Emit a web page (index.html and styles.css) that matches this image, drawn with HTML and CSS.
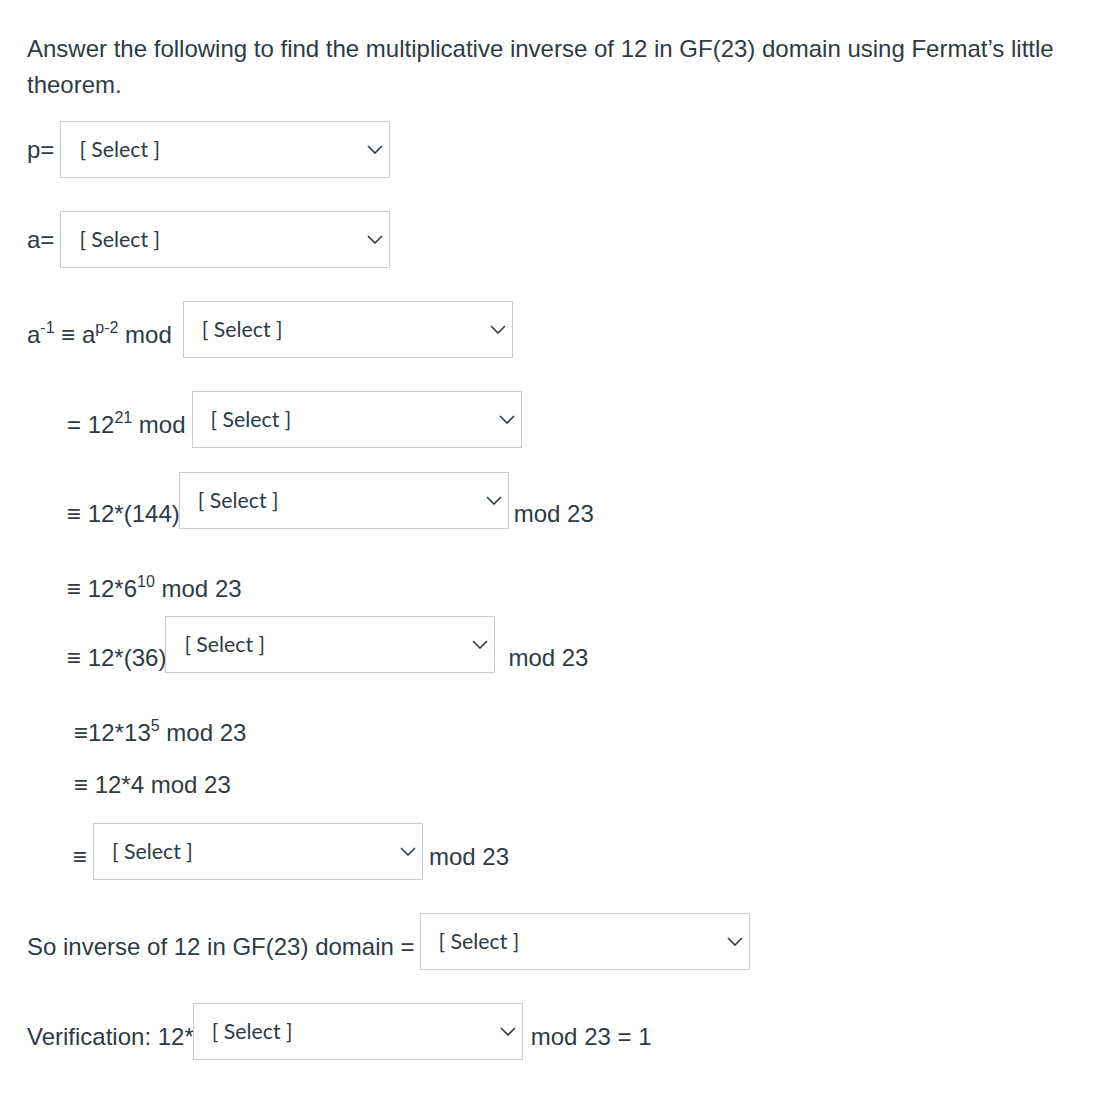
FILE: index.html
```html
<!DOCTYPE html>
<html lang="en">
<head>
<meta charset="utf-8">
<title>Fermat's little theorem</title>
<link rel="stylesheet" href="styles.css">
</head>
<body>
<div class="page">
  <p class="title">Answer the following to find the multiplicative inverse of 12 in GF(23) domain using Fermat’s little theorem.</p>

  <div class="row r1 g6">
    <span class="lbl b37">p=</span>
    <div class="sel"><span class="sel-text">[ Select ]</span><svg class="chev" viewBox="0 0 16 9" width="16" height="9"><path d="M1 1 L8 8 L15 1" fill="none" stroke="#2d3b45" stroke-width="1.6"/></svg></div>
  </div>

  <div class="row r2 g6">
    <span class="lbl b37">a=</span>
    <div class="sel"><span class="sel-text">[ Select ]</span><svg class="chev" viewBox="0 0 16 9" width="16" height="9"><path d="M1 1 L8 8 L15 1" fill="none" stroke="#2d3b45" stroke-width="1.6"/></svg></div>
  </div>

  <div class="row r3 g11">
    <span class="lbl b42">a<sup>-1</sup> ≡ a<sup>p-2</sup> mod</span>
    <div class="sel"><span class="sel-text">[ Select ]</span><svg class="chev" viewBox="0 0 16 9" width="16" height="9"><path d="M1 1 L8 8 L15 1" fill="none" stroke="#2d3b45" stroke-width="1.6"/></svg></div>
  </div>

  <div class="row r4 ind1 g6">
    <span class="lbl b42">= 12<sup>21</sup> mod</span>
    <div class="sel"><span class="sel-text">[ Select ]</span><svg class="chev" viewBox="0 0 16 9" width="16" height="9"><path d="M1 1 L8 8 L15 1" fill="none" stroke="#2d3b45" stroke-width="1.6"/></svg></div>
  </div>

  <div class="row r5 ind1 tight">
    <span class="lbl b50 pull1">≡ 12*(144)</span>
    <div class="sel"><span class="sel-text">[ Select ]</span><svg class="chev" viewBox="0 0 16 9" width="16" height="9"><path d="M1 1 L8 8 L15 1" fill="none" stroke="#2d3b45" stroke-width="1.6"/></svg></div>
    <span class="lbl b50 after5">mod 23</span>
  </div>

  <p class="line l1 ind1">≡ 12*6<sup>10</sup> mod 23</p>

  <div class="row r6 ind1 tight">
    <span class="lbl b50 pull1">≡ 12*(36)</span>
    <div class="sel"><span class="sel-text">[ Select ]</span><svg class="chev" viewBox="0 0 16 9" width="16" height="9"><path d="M1 1 L8 8 L15 1" fill="none" stroke="#2d3b45" stroke-width="1.6"/></svg></div>
    <span class="lbl b50 after13">mod 23</span>
  </div>

  <p class="line l2 ind2">≡12*13<sup>5</sup> mod 23</p>
  <p class="line l3 ind2">≡ 12*4 mod 23</p>

  <div class="row r7 ind2 g6">
    <span class="lbl b42 ml-1">≡</span>
    <div class="sel"><span class="sel-text">[ Select ]</span><svg class="chev" viewBox="0 0 16 9" width="16" height="9"><path d="M1 1 L8 8 L15 1" fill="none" stroke="#2d3b45" stroke-width="1.6"/></svg></div>
    <span class="lbl b42">mod 23</span>
  </div>

  <div class="row r8 g5">
    <span class="lbl b42">So inverse of 12 in GF(23) domain =</span>
    <div class="sel"><span class="sel-text">[ Select ]</span><svg class="chev" viewBox="0 0 16 9" width="16" height="9"><path d="M1 1 L8 8 L15 1" fill="none" stroke="#2d3b45" stroke-width="1.6"/></svg></div>
  </div>

  <div class="row r9">
    <span class="lbl b42 gap3">Verification: 12*</span>
    <div class="sel"><span class="sel-text">[ Select ]</span><svg class="chev" viewBox="0 0 16 9" width="16" height="9"><path d="M1 1 L8 8 L15 1" fill="none" stroke="#2d3b45" stroke-width="1.6"/></svg></div>
    <span class="lbl b42">mod 23 = 1</span>
  </div>
</div>
</body>
</html>
```
FILE: styles.css
```css
html, body {
  margin: 0;
  padding: 0;
  background: #ffffff;
}

.page {
  padding: 31px 0 0 27px;
  width: 1045px;
  font-family: "Liberation Sans", Arial, sans-serif;
  font-size: 24px;
  color: #2d3b45;
}

.title {
  margin: 0;
  line-height: 36px;
}

sup {
  font-size: 16px;
  line-height: 0;
  vertical-align: 0;
  position: relative;
  top: -10px;
}

.row {
  display: flex;
  align-items: flex-start;
  gap: 8px;
}

.row.tight { gap: 0; }
.row.g5 { gap: 5px; }
.row.g6 { gap: 6px; }
.row.g11 { gap: 11px; }

.lbl {
  line-height: 28px;
  white-space: nowrap;
}

.b37 { margin-top: 15px; }
.b42 { margin-top: 20px; }
.b50 { margin-top: 28px; }

.after5 { margin-left: 5px; }
.after13 { margin-left: 13px; }
.gap3 { margin-right: -9px; }
.pull1 { margin-right: -1px; }
.ml-1 { margin-left: -1px; }

.ind1 { padding-left: 40px; }
.ind2 { padding-left: 47px; }

.sel {
  box-sizing: border-box;
  width: 330px;
  height: 57px;
  border: 1px solid #c7cdd1;
  background: #ffffff;
  display: flex;
  justify-content: space-between;
  padding: 0 6px 0 18px;
  flex-shrink: 0;
}

.sel-text {
  font-family: Lato, "Liberation Sans", sans-serif;
  font-size: 21.3px;
  line-height: 26px;
  padding-top: 14px;
  color: #2d3b45;
}

.chev {
  align-self: center;
  display: block;
}

.line {
  margin: 0;
  line-height: 36px;
  white-space: nowrap;
}

.r1 { margin-top: 18px; }
.r2, .r3, .r4 { margin-top: 33px; }
.r5 { margin-top: 24px; }
.l1 { margin-top: 42px; }
.r6 { margin-top: 9px; }
.l2 { margin-top: 42px; }
.l3 { margin-top: 16px; }
.r7 { margin-top: 20px; }
.r8, .r9 { margin-top: 33px; }
```
